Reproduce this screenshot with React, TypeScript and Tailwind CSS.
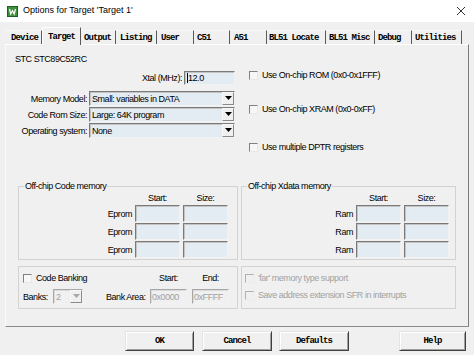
const sans = "font-['Liberation_Sans',Arial,sans-serif] text-[9px] leading-[12px] tracking-[-0.45px] whitespace-nowrap";
const mono = "font-['Liberation_Mono','Courier_New',monospace] font-bold text-[9px] leading-[10px] tracking-[-0.9px] text-black whitespace-nowrap";
const sunken =
  "border border-t-[#7a7a7a] border-l-[#7a7a7a] border-r-[#f2f2f2] border-b-[#f2f2f2] shadow-[inset_1px_1px_0_#c4c4c4]";
const sunkenOff =
  "border border-t-[#a8a8a8] border-l-[#a8a8a8] border-r-[#f2f2f2] border-b-[#f2f2f2] shadow-[inset_1px_1px_0_#dadada]";

const tabs = [
  { name: "Device", cls: "w-[37px] pl-[6px]" },
  { name: "Target", cls: "w-[39px] pl-[5px]", active: true },
  { name: "Output", cls: "w-[35px] pl-[3px]" },
  { name: "Listing", cls: "w-[41px] pl-[4px]" },
  { name: "User", cls: "w-[37px] pl-[4px]" },
  { name: "C51", cls: "w-[36px] pl-[3px]" },
  { name: "A51", cls: "w-[37px] pl-[4px]" },
  { name: "BL51 Locate", cls: "w-[59px] pl-[2px]" },
  { name: "BL51 Misc", cls: "w-[49px] pl-[3px]" },
  { name: "Debug", cls: "w-[37px] pl-[3px]" },
  { name: "Utilities", cls: "w-[50px] pl-[3px]" },
];

function Arrow({ off }: { off?: boolean }) {
  return (
    <div className="flex h-full w-[12px] items-center justify-center border border-t-[#f8f8f8] border-l-[#f8f8f8] border-r-[#8a8a8a] border-b-[#8a8a8a] bg-[#f0f0f0]">
      <svg width="7" height="5" viewBox="0 0 7 5">
        <path d="M0 0h7L3.5 4z" fill={off ? "#a8a8a8" : "#000"} />
      </svg>
    </div>
  );
}

function Select({ text }: { text: string }) {
  return (
    <div className={`flex h-[15px] w-[146px] items-center bg-[#e3ebf3] ${sunken}`}>
      <span className={`${sans} flex-1 pl-[2px] text-black`}>{text}</span>
      <Arrow />
    </div>
  );
}

function Box({ cls }: { cls: string }) {
  return <div className={`h-[17px] bg-[#e3ebf3] ${sunken} ${cls}`} />;
}

function Check({ text, off }: { text: string; off?: boolean }) {
  return (
    <div className="flex h-[12px] items-center">
      <div
        className={
          off
            ? "h-[9px] w-[9px] border border-t-[#b0b0b0] border-l-[#b0b0b0] border-r-[#ececec] border-b-[#ececec] bg-[#f0f0f0]"
            : "h-[9px] w-[9px] border border-t-[#808080] border-l-[#808080] border-r-[#e8e8e8] border-b-[#e8e8e8] bg-[#f7f7f7]"
        }
      />
      <span className={`${sans} ml-[4px] ${off ? "text-[#a2a2a2]" : "text-black"}`}>{text}</span>
    </div>
  );
}

function Btn({ text, cls }: { text: string; cls: string }) {
  return (
    <div
      className={`flex h-[20px] items-center justify-center border border-t-[#e4e4e4] border-l-[#e4e4e4] border-r-[#404040] border-b-[#404040] bg-[#f0f0f0] shadow-[inset_1px_1px_0_#ffffff,inset_-1px_-1px_0_#a0a0a0] ${cls}`}
    >
      <span className={mono}>{text}</span>
    </div>
  );
}

function MemRows({ label, pr }: { label: string; pr: string }) {
  return (
    <>
      <div className={`flex h-[10px] justify-end gap-[3px] ${pr}`}>
        <span className={`${sans} w-[45px] text-center leading-[10px] text-black`}>Start:</span>
        <span className={`${sans} w-[45px] text-center leading-[10px] text-black`}>Size:</span>
      </div>
      <div className="mt-[3px] flex flex-col gap-[1px]">
        {[0, 1, 2].map((i) => (
          <div key={i} className={`flex h-[17px] items-center justify-end ${pr}`}>
            <span className={`${sans} mr-[3px] text-black`}>{label}</span>
            <Box cls="w-[45px]" />
            <Box cls="ml-[3px] w-[45px]" />
          </div>
        ))}
      </div>
    </>
  );
}

export default function App() {
  return (
    <div className="flex h-[355px] w-[474px] flex-col overflow-hidden bg-[#f0f0f0]">
      {/* title bar */}
      <div className="flex h-[22px] items-center bg-white pl-[7px] pr-[8px]">
        <svg width="11" height="11" viewBox="0 0 11 11">
          <rect x="0.5" y="0.5" width="10" height="10" fill="#3f8f3c" stroke="#1e5e22" />
          <path d="M2.5 3l1.3 5 1.7-3.5 1.7 3.5 1.3-5" fill="none" stroke="#fff" strokeWidth="1.2" />
        </svg>
        <span className="ml-[5px] font-['Liberation_Sans',Arial,sans-serif] text-[9px] text-black">
          Options for Target 'Target 1'
        </span>
        <svg className="ml-auto" width="10" height="10" viewBox="0 0 10 10">
          <path d="M1 1l8 8M9 1l-8 8" stroke="#333" strokeWidth="1" />
        </svg>
      </div>

      {/* tab strip */}
      <div className="flex h-[22px] items-end pl-[5px]">
        {tabs.map((t) =>
          t.active ? (
            <div
              key={t.name}
              className={`relative z-10 -mb-px flex h-[18px] items-center border-t border-l border-r border-t-white border-l-white border-r-[#5a5a5a] bg-[#f0f0f0] ${t.cls}`}
            >
              <span className={mono}>{t.name}</span>
            </div>
          ) : (
            <div
              key={t.name}
              className={`flex h-[14px] items-center border-t border-r border-t-[#f8f8f8] border-r-[#5a5a5a] ${t.cls}`}
            >
              <span className={mono}>{t.name}</span>
            </div>
          )
        )}
      </div>

      {/* tab page */}
      <div className="relative ml-[5px] flex h-[283px] w-[464px] flex-col border border-t-white border-l-[#fafafa] border-r-[#7c7c7c] border-b-[#8a8a8a] bg-[#f0f0f0]">
        <div className="flex h-[135px]">
          <div className="flex w-[234px] flex-col">
            <span className={`${sans} mt-[8px] pl-[9px] text-black`}>STC STC89C52RC</span>
            <div className="mt-[6px] flex h-[14px] items-center justify-end pr-[5px]">
              <span className={`${sans} mr-[2px] text-black`}>Xtal (MHz):</span>
              <div className={`flex h-[14px] w-[51px] items-center bg-[#e3ebf3] pl-[2px] ${sunken}`}>
                <div className="h-[10px] w-px bg-black" />
                <span className={`${sans} text-black`}>12.0</span>
              </div>
            </div>
            <div className="mt-[6px] flex flex-col gap-[1px] pr-[5px]">
              {[
                ["Memory Model:", "Small: variables in DATA"],
                ["Code Rom Size:", "Large: 64K program"],
                ["Operating system:", "None"],
              ].map(([l, v]) => (
                <div key={l} className="flex h-[15px] items-center justify-end">
                  <span className={`${sans} mr-[2px] text-black`}>{l}</span>
                  <Select text={v} />
                </div>
              ))}
            </div>
          </div>
          <div className="flex flex-1 flex-col pl-[9px]">
            <div className="mt-[24px]">
              <Check text="Use On-chip ROM (0x0-0x1FFF)" />
            </div>
            <div className="mt-[22px]">
              <Check text="Use On-chip XRAM (0x0-0xFF)" />
            </div>
            <div className="mt-[26px]">
              <Check text="Use multiple DPTR registers" />
            </div>
          </div>
        </div>

        {/* memory groups */}
        <div className="flex h-[80px] pl-[12px]">
          <fieldset className="h-[80px] w-[220px] border border-[#d2d2d2]">
            <legend className={`${sans} ml-[5px] px-[1px] leading-[10px] text-black`}>Off-chip Code memory</legend>
            <MemRows label="Eprom" pr="pr-[9px]" />
          </fieldset>
          <fieldset className="ml-[3px] h-[80px] w-[215px] border border-[#d2d2d2]">
            <legend className={`${sans} ml-[5px] px-[1px] leading-[10px] text-black`}>Off-chip Xdata memory</legend>
            <MemRows label="Ram" pr="pr-[6px]" />
          </fieldset>
        </div>

        {/* banking */}
        <div className="mt-[6px] flex h-[43px] pl-[12px]">
          <div className="flex h-[43px] w-[220px] flex-col border border-[#d2d2d2]">
            <div className="mt-[5px] flex h-[12px] items-center pl-[4px]">
              <div className="w-[127px]">
                <Check text="Code Banking" />
              </div>
              <span className={`${sans} w-[37px] text-center text-black`}>Start:</span>
              <span className={`${sans} ml-[5px] w-[37px] text-center text-black`}>End:</span>
            </div>
            <div className="mt-[5px] flex h-[15px] items-center pl-[4px]">
              <span className={`${sans} w-[30px] text-black`}>Banks:</span>
              <div className={`flex h-[15px] w-[30px] items-center bg-[#f0f0f0] ${sunkenOff}`}>
                <span className={`${sans} flex-1 pl-[2px] text-[#a0a0a0]`}>2</span>
                <Arrow off />
              </div>
              <span className={`${sans} ml-[23px] w-[44px] text-black`}>Bank Area:</span>
              <div className={`flex h-[15px] w-[37px] items-center bg-[#f0f0f0] pl-[1px] ${sunkenOff}`}>
                <span className={`${sans} text-[#a0a0a0]`}>0x0000</span>
              </div>
              <div className={`ml-[5px] flex h-[15px] w-[37px] items-center bg-[#f0f0f0] pl-[1px] ${sunkenOff}`}>
                <span className={`${sans} text-[#a0a0a0]`}>0xFFFF</span>
              </div>
            </div>
          </div>
          <div className="ml-[3px] flex h-[43px] w-[215px] flex-col border border-[#d2d2d2] pl-[3px]">
            <div className="mt-[5px]">
              <Check off text="'far' memory type support" />
            </div>
            <div className="mt-[5px]">
              <Check off text="Save address extension SFR in interrupts" />
            </div>
          </div>
        </div>
      </div>

      {/* buttons */}
      <div className="mt-[4px] flex pl-[125px]">
        <Btn text="OK" cls="w-[69px]" />
        <Btn text="Cancel" cls="ml-[8px] w-[70px]" />
        <Btn text="Defaults" cls="ml-[7px] w-[70px]" />
        <Btn text="Help" cls="ml-[50px] w-[67px]" />
      </div>
    </div>
  );
}
